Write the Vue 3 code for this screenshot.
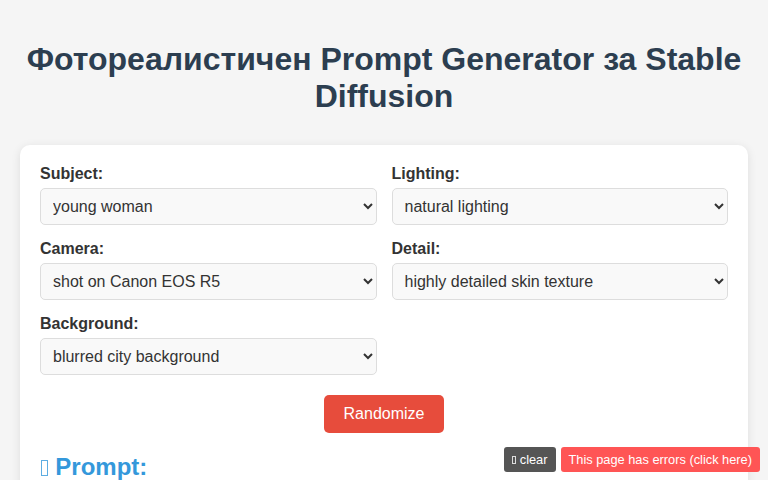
<template>
  <div class="page">
    <h1>Фотореалистичен Prompt Generator за Stable Diffusion</h1>

    <div class="card">
      <div class="fields">
        <div v-for="field in fields" :key="field.label" class="field">
          <label>{{ field.label }}</label>
          <select v-model="field.value">
            <option v-for="opt in field.options" :key="opt">{{ opt }}</option>
          </select>
        </div>
      </div>

      <div class="actions">
        <button class="randomize" @click="randomize">Randomize</button>
      </div>

      <h2><span class="tofu"></span> Prompt:</h2>
    </div>

    <!-- dev overlay buttons -->
    <div class="overlay">
      <button class="clear"><span class="tofu"></span> clear</button>
      <button class="errors">This page has errors (click here)</button>
    </div>
  </div>
</template>

<script setup>
import { reactive } from 'vue'

const fields = reactive([
  { label: 'Subject:', value: 'young woman', options: ['young woman', 'old man', 'little girl'] },
  { label: 'Lighting:', value: 'natural lighting', options: ['natural lighting', 'studio lighting', 'golden hour'] },
  { label: 'Camera:', value: 'shot on Canon EOS R5', options: ['shot on Canon EOS R5', 'shot on Sony A7 III', 'shot on Nikon D850'] },
  { label: 'Detail:', value: 'highly detailed skin texture', options: ['highly detailed skin texture', 'sharp focus', 'film grain'] },
  { label: 'Background:', value: 'blurred city background', options: ['blurred city background', 'forest background', 'plain studio background'] },
])

function randomize() {
  fields.forEach((f) => {
    f.value = f.options[Math.floor(Math.random() * f.options.length)]
  })
}
</script>

<style>
body {
  background-color: #f5f5f5;
}
</style>

<style scoped>
.page {
  padding: 20px;
  font-family: 'Liberation Sans', Arial, sans-serif;
  color: #333;
  line-height: normal;
}

h1 {
  color: #2c3e50;
  text-align: center;
  font-size: 32px;
  margin: 21.44px 0 30px;
}

.card {
  background-color: #fff;
  padding: 20px;
  border-radius: 10px;
  box-shadow: 0 2px 10px rgba(0, 0, 0, 0.1);
}

.fields {
  display: grid;
  grid-template-columns: 1fr 1fr;
  gap: 15px;
}

.field label {
  display: block;
  font-weight: 700;
  font-size: 16px;
  margin-bottom: 5px;
}

.field select {
  width: 100%;
  padding: 8px;
  border: 1px solid #ddd;
  border-radius: 5px;
  background-color: #f9f9f9;
  color: #333;
  font-family: inherit;
  font-size: 16px;
}

.actions {
  display: flex;
  justify-content: center;
  margin-top: 20px;
}

.randomize {
  background-color: #e74c3c;
  color: #fff;
  border: none;
  border-radius: 5px;
  padding: 10px 20px;
  font-family: inherit;
  font-size: 16px;
  cursor: pointer;
}

h2 {
  color: #3498db;
  font-size: 24px;
  margin: 20px 0 0;
}

/* missing-glyph box in front of the heading and the clear button */
.tofu {
  display: inline-block;
  box-sizing: border-box;
  width: 0.29em;
  height: 0.68em;
  margin: 0 0.04em 0 0.03em;
  border: 1px solid currentColor;
  opacity: 0.8;
  vertical-align: -0.02em;
}

.overlay {
  position: fixed;
  right: 8px;
  bottom: 8px;
  display: flex;
  gap: 5px;
}

.overlay button {
  border: none;
  border-radius: 3px;
  color: #fff;
  font-family: inherit;
  font-size: 12.8px;
  padding: 5px 8px;
  height: 25px;
  cursor: pointer;
}

.clear {
  background-color: #555;
}

.errors {
  background-color: #f55;
}
</style>
